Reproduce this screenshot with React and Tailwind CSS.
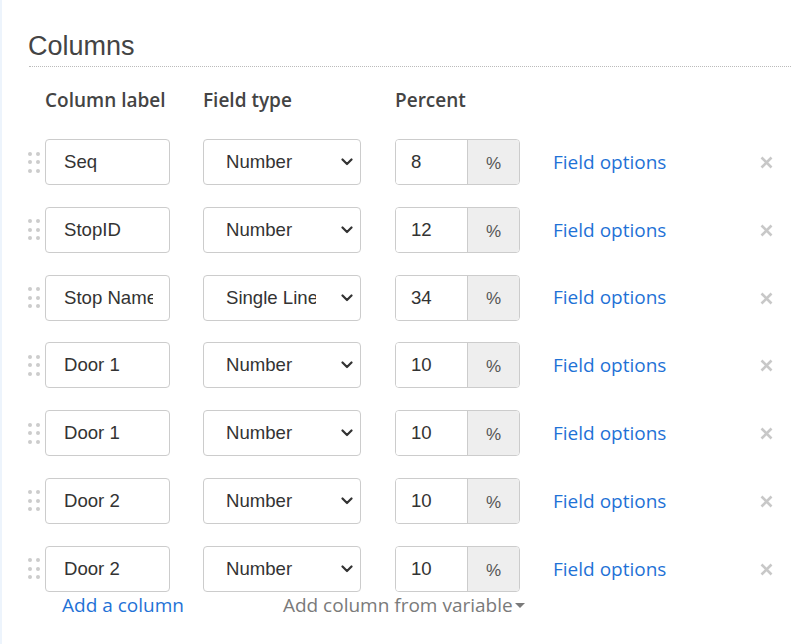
import React from "react";

const rows = [
  { label: "Seq", type: "Number", pct: "8" },
  { label: "StopID", type: "Number", pct: "12" },
  { label: "Stop Name", type: "Single Line", pct: "34" },
  { label: "Door 1", type: "Number", pct: "10" },
  { label: "Door 1", type: "Number", pct: "10" },
  { label: "Door 2", type: "Number", pct: "10" },
  { label: "Door 2", type: "Number", pct: "10" },
];

const sans = { fontFamily: '"Liberation Sans", Arial, sans-serif' };
const open = { fontFamily: '"Open Sans", "Noto Sans", sans-serif' };

function Handle() {
  return (
    <div className="w-[12px] mr-[5px] grid grid-cols-2 gap-x-[4px] gap-y-[4.5px] place-content-center">
      {Array.from({ length: 6 }).map((_, i) => (
        <span key={i} className="block w-[4px] h-[4px] rounded-full bg-[#cccccc]" />
      ))}
    </div>
  );
}

function Chevron() {
  return (
    <svg width="12" height="8" viewBox="0 0 12 8" className="shrink-0">
      <path d="M1.5 1.5 L6 6 L10.5 1.5" fill="none" stroke="#333" strokeWidth="2.2" strokeLinecap="round" strokeLinejoin="round" />
    </svg>
  );
}

function XIcon() {
  return (
    <svg width="13" height="13" viewBox="0 0 13 13">
      <path d="M1.5 1.5 L11.5 11.5 M11.5 1.5 L1.5 11.5" stroke="#c8c8c8" strokeWidth="2.6" strokeLinecap="butt" />
    </svg>
  );
}

function Row({ r }) {
  return (
    <div className="flex items-stretch h-[46px]">
      <Handle />
      <div
        className="w-[125px] border border-[#cccccc] rounded-[4px] pl-[18px] pr-[16px] flex items-center bg-white text-[18.6px] text-[#333333]"
        style={sans}
      >
        <div className="flex-1 overflow-hidden whitespace-nowrap">{r.label}</div>
      </div>
      <div
        className="ml-[33px] w-[158px] border border-[#cccccc] rounded-[4px] pl-[22px] pr-[7px] flex items-center bg-white text-[18.6px] text-[#333333]"
        style={sans}
      >
        <div className="w-[90px] overflow-hidden whitespace-nowrap">{r.type}</div>
        <div className="ml-auto flex items-center">
          <Chevron />
        </div>
      </div>
      <div className="ml-[34px] w-[125px] flex border border-[#cccccc] rounded-[4px] overflow-hidden" style={sans}>
        <div className="w-[72px] pl-[15px] flex items-center text-[18.6px] text-[#333333] bg-white border-r border-[#cccccc]">
          {r.pct}
        </div>
        <div className="flex-1 bg-[#eeeeee] flex items-center justify-center pt-[3px] text-[17px] text-[#555555]">%</div>
      </div>
      <div className="ml-[33px] flex items-center text-[19px] text-[#1f72d6] whitespace-nowrap" style={open}>
        Field options
      </div>
      <div className="ml-[94px] flex items-center pt-[1px]">
        <XIcon />
      </div>
    </div>
  );
}

export default function App() {
  return (
    <div className="min-h-screen bg-white border-l-2 border-[#edf4fc]">
      <div className="pl-[26px] pr-[11px] pt-[31px]">
        <h2 className="text-[27px] leading-[31px] text-[#444444] font-normal" style={sans}>
          Columns
        </h2>
        <div className="ml-[1px] mt-[4px] border-t border-dotted border-[#bbbbbb]" />
        <div className="flex mt-[20px] text-[19px] leading-[26px] font-semibold text-[#444444]" style={open}>
          <div className="w-[17px]" />
          <div className="w-[158px]">Column label</div>
          <div className="w-[192px]">Field type</div>
          <div>Percent</div>
        </div>
        <div className="mt-[26px] flex flex-col gap-y-[21.8px]">
          {rows.map((r, i) => (
            <Row key={i} r={r} />
          ))}
        </div>
        <div className="flex text-[19px] leading-[26px]" style={open}>
          <div className="ml-[34px] text-[#1f72d6]">Add a column</div>
          <div className="ml-[99px] text-[#7a7a7a] flex items-center">
            Add column from variable
            <svg width="10" height="6" viewBox="0 0 10 6" className="ml-[2px] mt-[2px]">
              <path d="M0 0 L10 0 L5 5 Z" fill="#7a7a7a" />
            </svg>
          </div>
        </div>
      </div>
    </div>
  );
}
